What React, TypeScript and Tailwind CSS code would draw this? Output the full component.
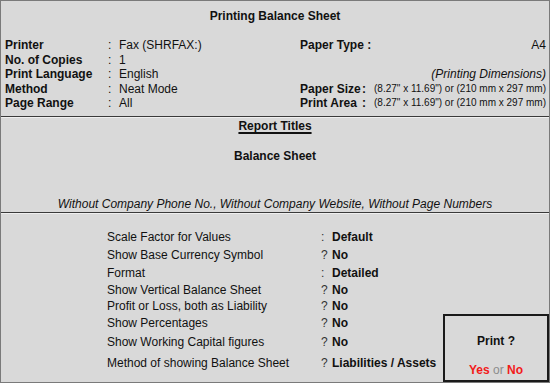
import React from "react";

const font = { fontFamily: '"Liberation Sans", Arial, sans-serif' };

function LeftRow({ label, value }: { label: string; value: string }) {
  return (
    <div className="flex h-[14.5px] items-center leading-[14px]">
      <span className="w-[103px] font-bold">{label}</span>
      <span className="w-[11px]">:</span>
      <span>{value}</span>
    </div>
  );
}

function DimRow({ label }: { label: string }) {
  return (
    <div className="flex h-[14.5px] items-center whitespace-nowrap leading-[14px]">
      <span className="w-[62px] shrink-0 font-bold">{label}</span>
      <span className="shrink-0 font-bold">:</span>
      <span className="flex-1 text-right text-[10px]">
        (8.27" x 11.69") or (210 mm x 297 mm)
      </span>
    </div>
  );
}

function Setting({
  label,
  mark,
  value,
  h,
}: {
  label: string;
  mark: string;
  value: string;
  h: string;
}) {
  return (
    <div className={`flex items-center leading-[14px] ${h}`}>
      <span className="w-[214px]">{label}</span>
      <span className="w-[11px] text-[#333]">{mark}</span>
      <span className="font-bold">{value}</span>
    </div>
  );
}

export default function App() {
  return (
    <div
      className="relative flex h-[383px] w-[550px] flex-col border border-[#7a7a7a] bg-[#d9d9d9] text-[12px] text-[#111]"
      style={font}
    >
      {/* Top section */}
      <div className="flex h-[116px] flex-col border-b border-[#3a3a3a]">
        <div className="pt-[8px] text-center font-bold leading-[14px]">
          Printing Balance Sheet
        </div>
        <div className="mt-[15px] flex pl-[4px] pr-[3px]">
          <div className="w-[295px] shrink-0">
            <LeftRow label="Printer" value="Fax (SHRFAX:)" />
            <LeftRow label="No. of Copies" value="1" />
            <LeftRow label="Print Language" value="English" />
            <LeftRow label="Method" value="Neat Mode" />
            <LeftRow label="Page Range" value="All" />
          </div>
          <div className="min-w-0 flex-1">
            <div className="flex h-[14.5px] items-center whitespace-nowrap leading-[14px]">
              <span className="font-bold">Paper Type :</span>
              <span className="flex-1 text-right">A4</span>
            </div>
            <div className="h-[14.5px]" />
            <div className="flex h-[14.5px] items-center justify-end whitespace-nowrap italic leading-[14px]">
              (Printing Dimensions)
            </div>
            <DimRow label="Paper Size" />
            <DimRow label="Print Area" />
          </div>
        </div>
      </div>

      {/* Report titles */}
      <div className="flex h-[96px] flex-col border-t border-[#efefef] border-b border-b-[#3a3a3a]">
        <div className="pt-[1px] text-center leading-[14px]">
          <span className="font-bold underline decoration-[1.5px] underline-offset-2">
            Report Titles
          </span>
        </div>
        <div className="mt-[16px] text-center font-bold leading-[14px]">
          Balance Sheet
        </div>
        <div className="mt-auto pb-[1px] text-center italic leading-[14px]">
          Without Company Phone No., Without Company Website, Without Page
          Numbers
        </div>
      </div>

      {/* Settings */}
      <div className="flex flex-1 flex-col border-t border-[#efefef] pl-[106px] pt-[14px]">
        <Setting h="h-[18px]" label="Scale Factor for Values" mark=":" value="Default" />
        <Setting h="h-[18px]" label="Show Base Currency Symbol" mark="?" value="No" />
        <Setting h="h-[18px]" label="Format" mark=":" value="Detailed" />
        <Setting h="h-[16px]" label="Show Vertical Balance Sheet" mark="?" value="No" />
        <Setting h="h-[16px]" label="Profit or Loss, both as Liability" mark="?" value="No" />
        <Setting h="h-[18px]" label="Show Percentages" mark="?" value="No" />
        <Setting h="h-[20px]" label="Show Working Capital figures" mark="?" value="No" />
        <Setting h="h-[22px]" label="Method of showing Balance Sheet" mark="?" value="Liabilities / Assets" />
      </div>

      {/* Print box */}
      <div className="absolute bottom-0 right-0 flex h-[68px] w-[106px] flex-col items-center border-2 border-[#1a1a1a] bg-[#d9d9d9]">
        <div className="mt-[18px] font-bold leading-[14px]">Print ?</div>
        <div className="mt-[15px] leading-[14px]">
          <span className="font-bold text-[#f21b1b]">Yes</span>
          <span className="text-[#8c8c8c]"> or </span>
          <span className="font-bold text-[#f21b1b]">No</span>
        </div>
      </div>
    </div>
  );
}
